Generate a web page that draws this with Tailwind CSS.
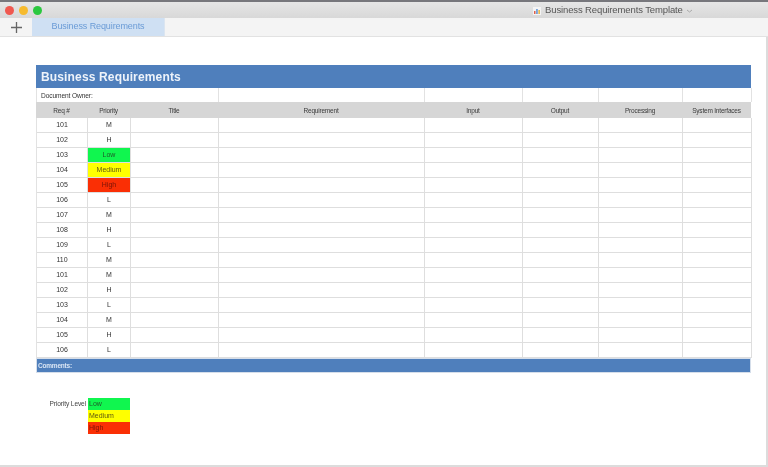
<!DOCTYPE html>
<html>
<head>
<script src="https://cdn.jsdelivr.net/npm/@tailwindcss/browser@4"></script>
</head>
<body class="overflow-hidden bg-white">
<div class="w-[768px] h-[467px] overflow-hidden bg-white font-['Liberation_Sans',sans-serif] text-[#333] blur-[0.4px]">
<!-- Title bar -->
<div class="h-[18px] border-t-2 border-[#77777c] bg-linear-to-b from-[#e6e6e6] to-[#d8d8d8] flex items-center relative">
    <div class="flex gap-[5px] pl-[5px]">
        <span class="w-[9px] h-[9px] rounded-full bg-[#f0584f]"></span>
        <span class="w-[9px] h-[9px] rounded-full bg-[#f7bb2e]"></span>
        <span class="w-[9px] h-[9px] rounded-full bg-[#2bc83f]"></span>
    </div>
    <div class="absolute left-[533px] top-0 h-4 flex items-center text-[9.5px] tracking-[-0.12px] text-[#555] pt-[1px]">
        <svg class="w-2 h-2 mr-[4px]" viewBox="0 0 8 8"><rect width="8" height="8" fill="#f4f4f4"/><rect x="1" y="4" width="1.5" height="3" fill="#e0604a"/><rect x="3.2" y="2" width="1.5" height="5" fill="#5a8fd0"/><rect x="5.4" y="3" width="1.5" height="4" fill="#e9b13c"/></svg>
        <span>Business Requirements Template</span>
        <svg class="w-[7px] h-1 ml-[3px]" viewBox="0 0 7 4"><path d="M1 1l2.5 2L6 1" fill="none" stroke="#aaa"/></svg>
    </div>
</div>
<!-- Tab bar -->
<div class="h-[19px] bg-[#f4f4f4] border-b border-[#e2e2e2] flex">
    <div class="w-8 flex items-center justify-center">
        <svg class="w-[11px] h-[11px]" viewBox="0 0 11 11"><path d="M5.5 0v11M0 5.5h11" stroke="#666" stroke-width="1.3"/></svg>
    </div>
    <div class="w-[133px] bg-[#cfe0f3] flex items-center justify-center text-[9px] tracking-[-0.1px] text-[#6a9bd6] border-r border-[#dbe5f0]">Business Requirements</div>
</div>
<!-- Sheet -->
<div class="h-[430px] border-r-2 border-b-2 border-[#dcdcdc] pt-7 pl-9">
    <div class="w-[715px]">
        <div class="h-[23px] bg-[#4f7fbc] flex items-center pl-[5px] text-[12px] font-bold tracking-[0.15px] text-[#eef3fa]">Business Requirements</div>
        <div id="sheet" class="text-[7px] text-[#333]"></div>
        <div class="h-[15px] bg-[#4f7fbc] border border-[#d5deea] flex items-center pl-[1px] text-[6.5px] tracking-[-0.2px] font-bold text-[#d9e5f4]">Comments:</div>
    </div>
    <!-- Priority legend -->
    <div class="mt-[25px] flex text-[7px]">
        <div class="w-[50px] text-right pt-[1px] text-[6.6px] tracking-[-0.12px] text-[#444]">Priority Level</div>
        <div class="ml-[2px] w-[42px]">
            <div class="h-3 bg-[#10f64f] flex items-center pl-[1px] text-[#1f5a2a]">Low</div>
            <div class="h-3 bg-[#ffff00] flex items-center pl-[1px] text-[#5f5a10]">Medium</div>
            <div class="h-3 bg-[#fa2f05] flex items-center pl-[1px] text-[#7a1408]">High</div>
        </div>
    </div>
</div>
</div>
<script>
const gridCols = 'grid grid-cols-[51px_43px_88px_206px_98px_76px_84px_69px]';
const cell = 'border-r border-b border-[#dedede] flex items-center justify-center pt-[1px]';

// Document owner row
let html = `<div class="${gridCols} h-[14px] border-l border-[#e2e2e2]">
    <div class="col-span-3 border-r border-[#e2e2e2] flex items-center pl-[4px] pt-[1px] text-[6.6px] tracking-[-0.1px]">Document Owner:</div>
    <div class="border-r border-[#e2e2e2]"></div><div class="border-r border-[#e2e2e2]"></div>
    <div class="border-r border-[#e2e2e2]"></div><div class="border-r border-[#e2e2e2]"></div>
    <div class="border-r border-[#e2e2e2]"></div>
</div>`;

// Header row
html += `<div class="${gridCols} h-4 bg-[#d6d6d6] text-[6.5px] tracking-[-0.2px] text-[#3a3a3a]">` +
    ['Req #', 'Priority', 'Title', 'Requirement', 'Input', 'Output', 'Processing', 'System Interfaces']
        .map(t => `<div class="flex items-center justify-center pt-[1px]">${t}</div>`).join('') +
    '</div>';

const rows = [
    ['101', 'M'], ['102', 'H'], ['103', 'Low'], ['104', 'Medium'], ['105', 'High'], ['106', 'L'],
    ['107', 'M'], ['108', 'H'], ['109', 'L'], ['110', 'M'], ['101', 'M'], ['102', 'H'],
    ['103', 'L'], ['104', 'M'], ['105', 'H'], ['106', 'L']
];
const colors = {
    Low: 'bg-[#10f64f] text-[#1f5a2a]',
    Medium: 'bg-[#ffff00] text-[#5f5a10]',
    High: 'bg-[#fa2f05] text-[#7a1408]'
};
rows.forEach(([req, pri]) => {
    html += `<div class="${gridCols} h-[15px] border-l border-[#e2e2e2]">
        <div class="${cell}">${req}</div>
        <div class="${cell} ${colors[pri] || ''}">${pri}</div>
        <div class="${cell}"></div><div class="${cell}"></div><div class="${cell}"></div>
        <div class="${cell}"></div><div class="${cell}"></div><div class="${cell}"></div>
    </div>`;
});
document.getElementById('sheet').innerHTML = html;
</script>
</body>
</html>
